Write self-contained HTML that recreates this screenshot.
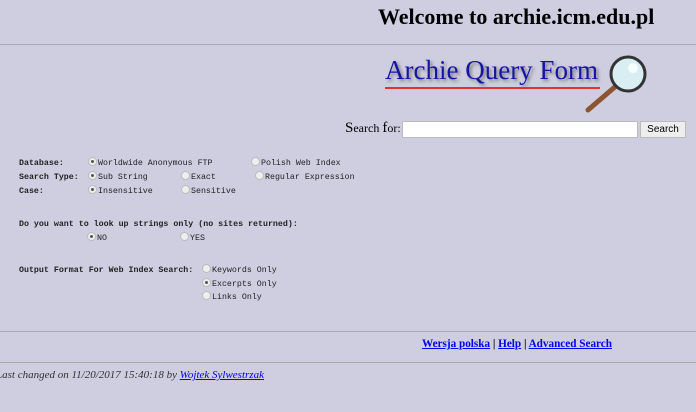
<!DOCTYPE html>
<html><head><meta charset="utf-8"><style>
body{margin:0;width:696px;height:412px;background:#cfcde0;position:relative;overflow:hidden;font-family:"Liberation Serif",serif}
.a{position:absolute;white-space:nowrap}
.m{font-family:"Liberation Mono",monospace;font-size:8.3px;color:#222;margin-top:1px}
.b{font-weight:bold}
.r{position:absolute;width:7px;height:7px;border-radius:50%;background:#eee;border:1px solid #bbb;margin-top:-1px}
.r.on::after{content:"";position:absolute;left:2px;top:2px;width:3px;height:3px;border-radius:50%;background:#555}
hr{position:absolute;left:0;width:696px;margin:0;border:0;border-top:1px solid #aaa;height:0}
a{color:#00e}
</style></head><body>
<div class="a b" style="left:378px;top:4px;font-size:22px;color:#000">Welcome to archie.icm.edu.pl</div>
<hr style="top:44px">
<div class="a" style="left:385px;top:55px;font-size:27px;color:#1515a5;text-shadow:2px 2px 3px #777">Archie Query Form</div>
<div class="a" style="left:385px;top:87px;width:215px;height:2px;background:#d33"></div>
<svg class="a" style="left:580px;top:50px" width="75" height="65">
<line x1="8" y1="60" x2="36" y2="36" stroke="#8a5530" stroke-width="5" stroke-linecap="round"/>
<circle cx="48" cy="24" r="17" fill="#d8eef3" stroke="#333" stroke-width="3"/>
<circle cx="53" cy="18" r="5" fill="#fff" opacity=".8"/>
</svg>
<div class="a" style="left:345px;top:120px;font-size:12px;color:#000"><span style="font-size:15px">S</span>earch <span style="font-size:15px">f</span>or:</div>
<div class="a" style="left:402px;top:121px;width:234px;height:15px;background:#fff;border:1px solid #bbb"></div>
<div class="a" style="left:640px;top:121px;width:44px;height:15px;background:#eee;border:1px solid #bbb;font-family:'Liberation Sans',sans-serif;font-size:10px;text-align:center;line-height:15px">Search</div>

<div class="a m b" style="left:19px;top:158px">Database:</div>
<div class="r on" style="left:88px;top:158px"></div><div class="a m" style="left:98px;top:158px">Worldwide Anonymous FTP</div>
<div class="r" style="left:251px;top:158px"></div><div class="a m" style="left:261px;top:158px">Polish Web Index</div>
<div class="a m b" style="left:19px;top:172px">Search Type:</div>
<div class="r on" style="left:88px;top:172px"></div><div class="a m" style="left:98px;top:172px">Sub String</div>
<div class="r" style="left:181px;top:172px"></div><div class="a m" style="left:191px;top:172px">Exact</div>
<div class="r" style="left:255px;top:172px"></div><div class="a m" style="left:265px;top:172px">Regular Expression</div>
<div class="a m b" style="left:19px;top:186px">Case:</div>
<div class="r on" style="left:88px;top:186px"></div><div class="a m" style="left:98px;top:186px">Insensitive</div>
<div class="r" style="left:181px;top:186px"></div><div class="a m" style="left:191px;top:186px">Sensitive</div>

<div class="a m b" style="left:19px;top:219px">Do you want to look up strings only (no sites returned):</div>
<div class="r on" style="left:87px;top:233px"></div><div class="a m" style="left:97px;top:233px">NO</div>
<div class="r" style="left:180px;top:233px"></div><div class="a m" style="left:190px;top:233px">YES</div>

<div class="a m b" style="left:19px;top:265px">Output Format For Web Index Search:</div>
<div class="r" style="left:202px;top:265px"></div><div class="a m" style="left:212px;top:265px">Keywords Only</div>
<div class="r on" style="left:202px;top:279px"></div><div class="a m" style="left:212px;top:279px">Excerpts Only</div>
<div class="r" style="left:202px;top:292px"></div><div class="a m" style="left:212px;top:292px">Links Only</div>

<hr style="top:331px">
<div class="a b" style="left:422px;top:338px;font-size:11.2px"><a href="#">Wersja polska</a> | <a href="#">Help</a> | <a href="#">Advanced Search</a></div>
<hr style="top:362px">
<div class="a" style="left:-4px;top:369px;font-size:11px;font-style:italic;color:#333">Last changed on 11/20/2017 15:40:18 by <a href="#">Wojtek Sylwestrzak</a></div>
</body></html>
